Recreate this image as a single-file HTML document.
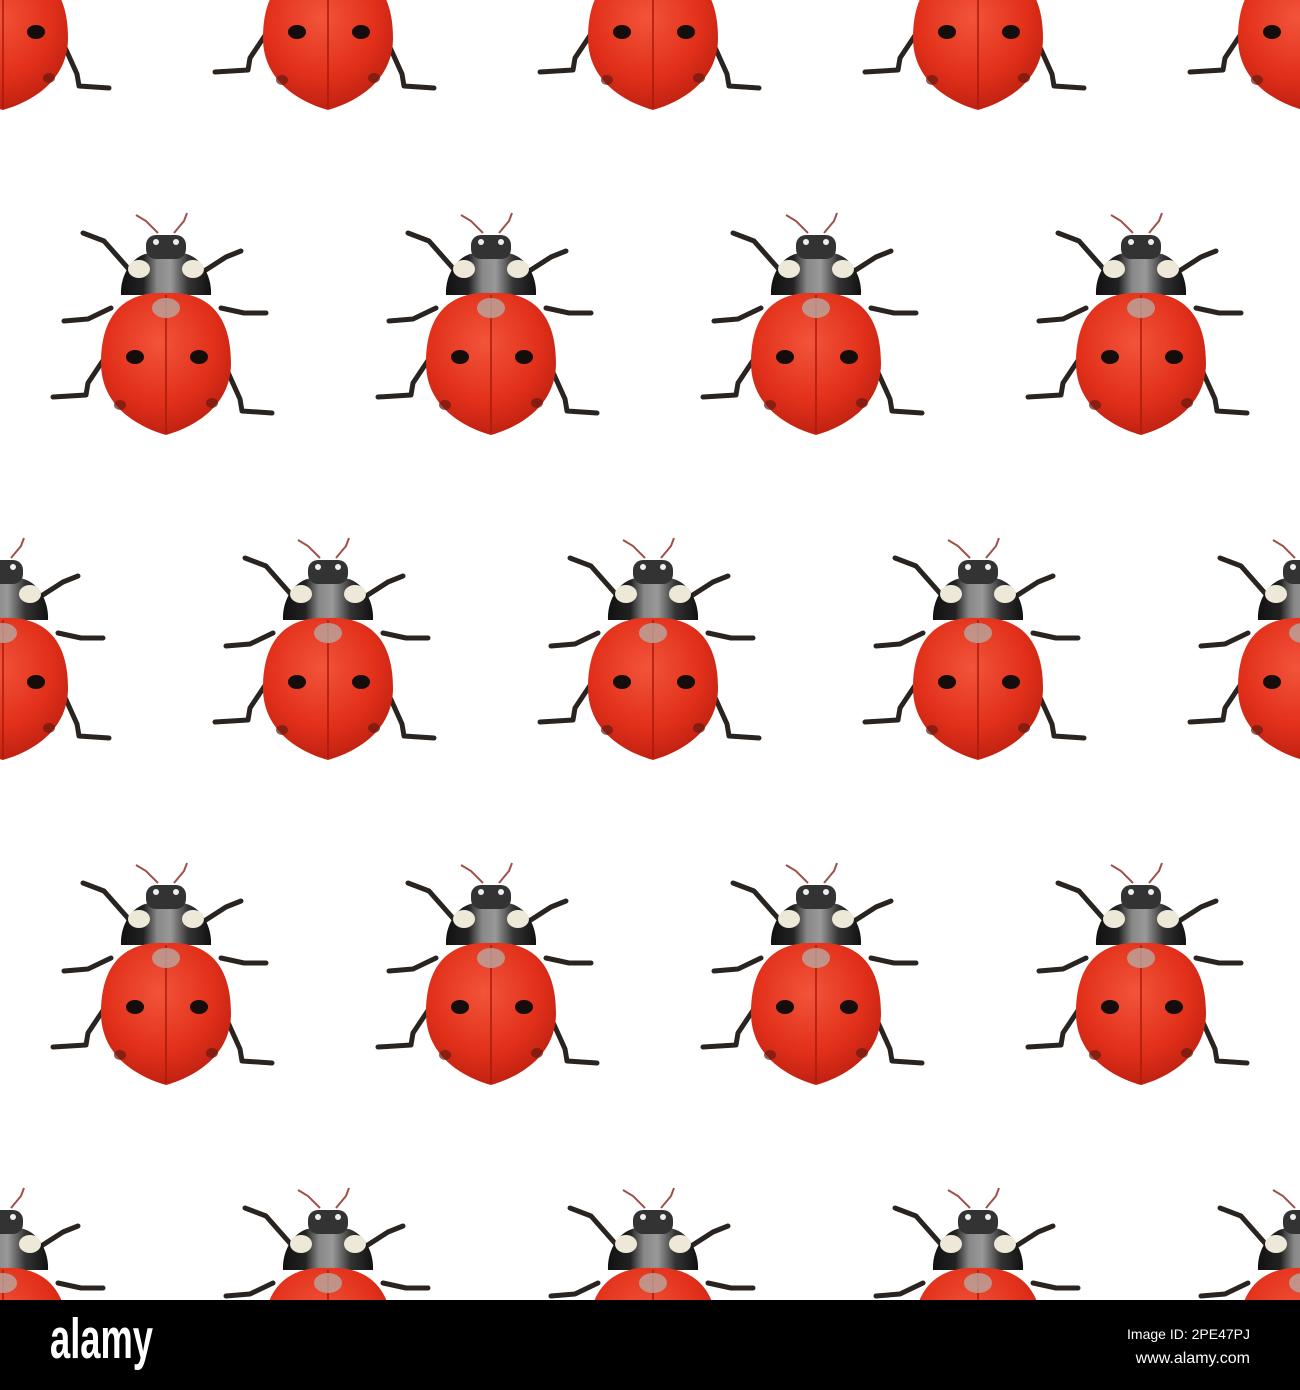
<!DOCTYPE html>
<html><head><meta charset="utf-8"><style>
html,body{margin:0;padding:0;width:1300px;height:1390px;overflow:hidden;background:#fff}
svg{display:block}
</style></head><body>
<svg width="1300" height="1390" viewBox="0 0 1300 1390" xmlns="http://www.w3.org/2000/svg">
<defs>
<radialGradient id="red" cx="0.45" cy="0.35" r="0.7">
<stop offset="0" stop-color="#f2543a"/><stop offset="0.6" stop-color="#e2301a"/><stop offset="1" stop-color="#b81e10"/>
</radialGradient>
<linearGradient id="gray" x1="0" x2="1">
<stop offset="0" stop-color="#111"/><stop offset="0.25" stop-color="#222"/><stop offset="0.4" stop-color="#888"/><stop offset="0.55" stop-color="#999"/><stop offset="0.75" stop-color="#333"/><stop offset="1" stop-color="#111"/>
</linearGradient>
<g id="bug">
<g stroke="#2a2420" stroke-width="5" fill="none" stroke-linecap="round" stroke-linejoin="round">
<path d="M-32,62 L-62,28 L-83,20"/>
<path d="M32,62 L60,44 L75,38"/>
<path d="M-55,95 L-78,106 L-102,108"/>
<path d="M55,95 L78,100 L100,100"/>
<path d="M-58,140 L-78,170 L-80,182 L-113,184"/>
<path d="M60,155 L74,186 L76,198 L106,200"/>
</g>
<g stroke="#a0504a" stroke-width="2" fill="none">
<path d="M-8,20 L-20,8 L-30,2"/><path d="M8,20 L18,8 L21,0"/>
</g>
<path d="M-45,82 C-46,62 -34,42 -16,40 L16,40 C34,42 46,62 45,82 Z" fill="url(#gray)"/>
<ellipse cx="-27" cy="56" rx="11" ry="9" fill="#eee8d8"/>
<ellipse cx="27" cy="56" rx="11" ry="9" fill="#eee8d8"/>
<rect x="-20" y="22" width="40" height="24" rx="10" fill="#333"/>
<circle cx="-10" cy="29" r="3" fill="#eee"/><circle cx="10" cy="29" r="3" fill="#eee"/>
<path d="M0,80 C35,78 65,95 65,150 C65,195 25,215 0,222 C-25,215 -65,195 -65,150 C-65,95 -35,78 0,80 Z" fill="url(#red)"/>
<path d="M0,82 L0,220" stroke="#a81a0c" stroke-width="1.5"/>
<ellipse cx="0" cy="95" rx="14" ry="10" fill="#b8a8a0" opacity="0.8"/>
<ellipse cx="-31" cy="144" rx="9" ry="7" fill="#140d0b"/>
<ellipse cx="33" cy="144" rx="9" ry="7" fill="#140d0b"/>
<ellipse cx="-46" cy="192" rx="6" ry="5" fill="#6a1a10" opacity="0.7"/>
<ellipse cx="46" cy="190" rx="6" ry="5" fill="#6a1a10" opacity="0.7"/>
</g>
</defs>
<rect width="1300" height="1300" fill="#fff"/>
<use href="#bug" x="3" y="-112"/><use href="#bug" x="328" y="-112"/><use href="#bug" x="653" y="-112"/><use href="#bug" x="978" y="-112"/><use href="#bug" x="1303" y="-112"/>
<use href="#bug" x="3" y="538"/><use href="#bug" x="328" y="538"/><use href="#bug" x="653" y="538"/><use href="#bug" x="978" y="538"/><use href="#bug" x="1303" y="538"/>
<use href="#bug" x="3" y="1188"/><use href="#bug" x="328" y="1188"/><use href="#bug" x="653" y="1188"/><use href="#bug" x="978" y="1188"/><use href="#bug" x="1303" y="1188"/>
<use href="#bug" x="166" y="213"/><use href="#bug" x="491" y="213"/><use href="#bug" x="816" y="213"/><use href="#bug" x="1141" y="213"/>
<use href="#bug" x="166" y="863"/><use href="#bug" x="491" y="863"/><use href="#bug" x="816" y="863"/><use href="#bug" x="1141" y="863"/>
<rect x="0" y="1300" width="1300" height="90" fill="#000"/>
<g transform="translate(50,1358) scale(1,1.35)">
<text x="0" y="0" font-family="Liberation Sans, sans-serif" font-weight="bold" font-size="42" fill="#fff" textLength="103" lengthAdjust="spacingAndGlyphs">alamy</text>
</g>
<text x="1250" y="1339" text-anchor="end" font-family="Liberation Sans, sans-serif" font-size="14" fill="#fff">Image ID: 2PE47PJ</text>
<text x="1250" y="1363" text-anchor="end" font-family="Liberation Sans, sans-serif" font-size="16" fill="#fff">www.alamy.com</text>
</svg>
</body></html>
